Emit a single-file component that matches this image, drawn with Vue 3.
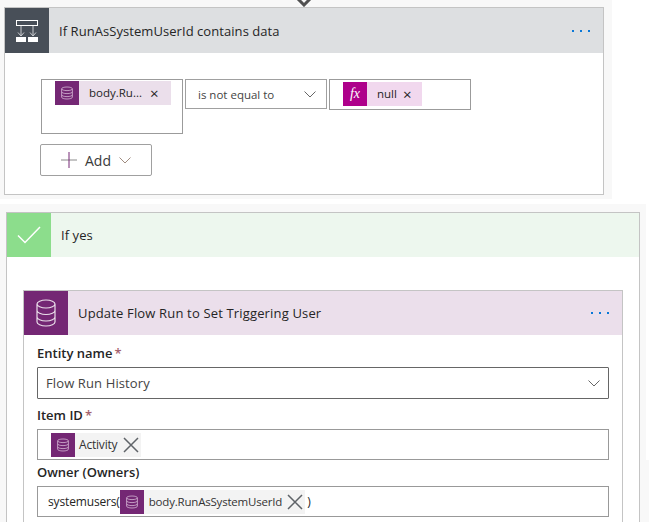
<script setup>
const dbPath = 'M1 4v14c0 1.7 4 3 9 3s9-1.3 9-3V4M1 4c0-1.7 4-3 9-3s9 1.3 9 3-4 3-9 3-9-1.300-9-3zM1 9c0 1.700 4 3 9 3s9-1.300 9-3M1 14c0 1.700 4 3 9 3s9-1.300 9-3'
</script>

<template>
  <div class="page">
    <div class="panel top-panel">
      <svg class="flow-arrow" width="16" height="7" viewBox="0 0 16 7"><path d="M2 -1 L8 5 L14 -1" fill="none" stroke="#505050" stroke-width="3"/></svg>
      <section class="card cond-card">
        <header class="head cond-head">
          <div class="head-icon cond-icon">
            <svg width="22" height="22" viewBox="0 0 22 22" fill="none">
              <rect x="0.500" y="0.500" width="21" height="5" stroke="#fff" stroke-width="1"/>
              <path d="M5 6v10M2 12.500 5 16l3-3.500M17 6v10M14 12.500l3 3.500 3-3.500" stroke="#c9cbce" stroke-width="1"/>
              <rect x="0" y="17" width="10" height="5" fill="#fff"/>
              <rect x="12" y="17" width="10" height="5" fill="#fff"/>
            </svg>
          </div>
          <h2 class="head-title">If RunAsSystemUserId contains data</h2>
          <div class="dots"><i></i><i></i><i></i></div>
        </header>
        <div class="cond-body">
          <div class="cond-row">
            <div class="cbox left-box">
              <span class="token purple-token tok-left">
                <span class="tok-icon db-bg">
                  <svg width="12" height="16" viewBox="0 0 20 22" fill="none" stroke="#c9a6c9" stroke-width="1.500"><path :d="dbPath"/></svg>
                </span>
                <span class="tok-text">body.Ru...</span>
                <span class="tok-x">×</span>
              </span>
            </div>
            <div class="cbox op-box">
              <span class="op-text">is not equal to</span>
              <svg class="chev" width="12" height="7" viewBox="0 0 12 7" fill="none" stroke="#666"><path d="M.5.5 6 6 11.500.5"/></svg>
            </div>
            <div class="cbox fx-box">
              <span class="token pink-token tok-fx">
                <span class="tok-icon fx-bg"><span class="fx">fx</span></span>
                <span class="tok-text null">null</span>
                <span class="tok-x">×</span>
              </span>
            </div>
          </div>
          <button class="add-btn">
            <svg width="16" height="16" viewBox="0 0 16 16"><path d="M0 8h16" stroke="#8a8a8a" stroke-width="1"/><path d="M8 0v16" stroke="#742774" stroke-width="1"/></svg>
            <span class="add-text">Add</span>
            <svg width="12" height="7" viewBox="0 0 12 7" fill="none" stroke="#a08c80"><path d="M.5.5 6 6 11.500.5"/></svg>
          </button>
        </div>
      </section>
    </div>

    <div class="panel yes-panel">
      <section class="card yes-card">
        <header class="head yes-head">
          <div class="head-icon yes-icon">
            <svg width="24" height="18" viewBox="0 0 24 18" fill="none" stroke="#fff" stroke-width="1.500"><path d="M1 9.500 8 16.500 23 1"/></svg>
          </div>
          <h2 class="head-title">If yes</h2>
        </header>
        <div class="yes-body">
          <section class="card update-card">
            <header class="head update-head">
              <div class="head-icon db-bg">
                <svg width="20" height="28" viewBox="0 0 20 28" fill="none" stroke="#eadfea" stroke-width="1.200"><path d="M1 5v18c0 2 4 4 9 4s9-2 9-4V5M1 5c0-2 4-4 9-4s9 2 9 4-4 4-9 4-9-2-9-4zM1 11.500c0 2 4 4 9 4s9-2 9-4M1 18c0 2 4 4 9 4s9-2 9-4"/></svg>
              </div>
              <h2 class="head-title update-title">Update Flow Run to Set Triggering User</h2>
              <div class="dots"><i></i><i></i><i></i></div>
            </header>
            <div class="form">
              <label class="label">Entity name<span class="req">*</span></label>
              <div class="input select">
                <span class="select-text">Flow Run History</span>
                <svg width="12" height="7" viewBox="0 0 12 7" fill="none" stroke="#666"><path d="M.5.5 6 6 11.500.5"/></svg>
              </div>
              <label class="label">Item ID<span class="req">*</span></label>
              <div class="input field">
                <span class="token gray-token">
                  <span class="tok-icon db-bg">
                    <svg width="12" height="16" viewBox="0 0 20 22" fill="none" stroke="#c9a6c9" stroke-width="1.500"><path :d="dbPath"/></svg>
                  </span>
                  <span class="gray-text">Activity</span>
                  <svg class="big-x" width="16" height="16" viewBox="0 0 16 16" stroke="#5f6368" stroke-width="1.500"><path d="M1 1l14 14M15 1 1 15"/></svg>
                </span>
              </div>
              <label class="label">Owner (Owners)</label>
              <div class="input field owner">
                <span class="plain">systemusers(</span>
                <span class="token gray-token">
                  <span class="tok-icon db-bg">
                    <svg width="12" height="16" viewBox="0 0 20 22" fill="none" stroke="#c9a6c9" stroke-width="1.500"><path :d="dbPath"/></svg>
                  </span>
                  <span class="gray-text owner-tok">body.RunAsSystemUserId</span>
                  <svg class="big-x" width="16" height="16" viewBox="0 0 16 16" stroke="#5f6368" stroke-width="1.500"><path d="M1 1l14 14M15 1 1 15"/></svg>
                </span>
                <span class="plain close">)</span>
              </div>
            </div>
          </section>
        </div>
      </section>
    </div>
  </div>
</template>

<style>
html, body { background: #fff; }
</style>

<style scoped>
.page {
  width: 652px;
  height: 527px;
  font-family: "Open Sans", "Noto Sans", sans-serif;
  color: #252525;
  overflow: hidden;
  position: relative;
}
.page::after { content: ""; position: absolute; left: 646px; top: 460px; width: 3px; height: 62px; background: #f8f8f8; }
.panel { background: #f8f8f8; position: relative; }
.top-panel { width: 612px; height: 199px; padding: 7px 8px 0 4px; box-sizing: border-box; }
.flow-arrow { position: absolute; left: 296px; top: 0; }
.yes-panel { width: 646px; height: 318px; margin-top: 5px; padding: 8px 6px 0; box-sizing: border-box; overflow: hidden; }
.card { background: #fff; border: 1px solid #c4c4c4; box-sizing: border-box; }
.cond-card { height: 188px; }
.yes-card { height: 330px; }
.head { display: flex; align-items: center; height: 44px; }
.cond-head { background: #dddfe1; height: 45px; }
.yes-head { background: #edf7ee; }
.update-head { background: #ebdfeb; }
.head-icon { width: 44px; height: 100%; display: flex; align-items: center; justify-content: center; flex: none; }
.cond-icon { background: #484f58; }
.yes-icon { background: #8cdd8c; }
.db-bg { background: #742774; }
.head-title { margin: 0 0 0 10px; font-size: 13px; font-weight: 400; flex: 1; white-space: nowrap; letter-spacing: .06px; }
.update-title { letter-spacing: .16px; }
.dots { display: flex; gap: 6px; margin-right: 13px; }
.dots i { width: 2px; height: 2px; background: #0a78d8; display: block; }
.cond-body { padding: 26px 0 0 36px; }
.cond-row { display: flex; gap: 2px; align-items: flex-start; }
.cbox { border: 1px solid #9b9b9b; box-sizing: border-box; width: 142px; background: #fff; }
.left-box { height: 55px; padding: 1px 0 0 13px; }
.op-box { height: 30px; display: flex; align-items: center; justify-content: space-between; padding: 0 10px 0 12px; border-color: #a0a0a0; }
.op-text { font-size: 11.5px; color: #444; }
.fx-box { height: 31px; padding: 1px 0 0 13px; }
.token { display: inline-flex; align-items: center; height: 24px; }
.tok-left { width: 116px; }
.tok-fx { width: 79px; }
.purple-token { background: #ebdfeb; }
.pink-token { background: #f1d8ee; }
.gray-token { background: #f3f3f3; }
.tok-icon { width: 24px; height: 24px; display: flex; align-items: center; justify-content: center; flex: none; }
.fx-bg { background: #ae008b; }
.fx { font-family: "Liberation Serif", serif; font-style: italic; color: #fff; font-size: 14px; }
.tok-text { font-size: 11.5px; margin-left: 10px; color: #252525; margin-top: -2px; }
.tok-left .tok-text { width: 56px; white-space: nowrap; }
.null { width: 21px; }
.tok-x { font-size: 15px; line-height: 1; margin-left: 5px; color: #252525; margin-top: 1px; }
.add-btn {
  display: flex; align-items: center; margin-top: 10px; margin-left: -1px;
  width: 112px; height: 32px; box-sizing: border-box; padding: 0 0 0 20px;
  background: #fff; border: 1px solid #a0a0a0; border-radius: 2px; font-family: inherit;
}
.add-text { font-size: 14px; font-weight: 500; margin: 0 8px 0 8px; color: #3a3a3a; }
.yes-body { padding: 33px 16px 0; }
.update-card { height: 260px; }
.form { padding: 8px 13px 0; display: flex; flex-direction: column; }
.label { font-size: 13px; font-weight: 600; color: #252525; height: 24px; line-height: 20px; }
.req { color: #a4626e; margin-left: 2px; }
.input { box-sizing: border-box; width: 572px; display: flex; align-items: center; background: #fff; }
.select { height: 32px; border: 1px solid #666; border-radius: 1px; justify-content: space-between; padding: 0 8px; margin-bottom: 6px; }
.select-text { font-size: 13px; color: #444; letter-spacing: .12px; }
.field { height: 31px; border: 1px solid #999; padding: 0 0 0 13px; margin-bottom: 2px; }
.owner { padding-left: 10px; }
.gray-text { font-size: 12px; margin: 0 6px 0 4px; color: #333; letter-spacing: -.2px; }
.owner-tok { font-size: 11.5px; margin: 0 5px 0 5px; }
.big-x { margin-right: 2px; }
.plain { font-size: 12px; color: #252525; letter-spacing: -.15px; }
.close { margin-left: 2px; }
</style>
